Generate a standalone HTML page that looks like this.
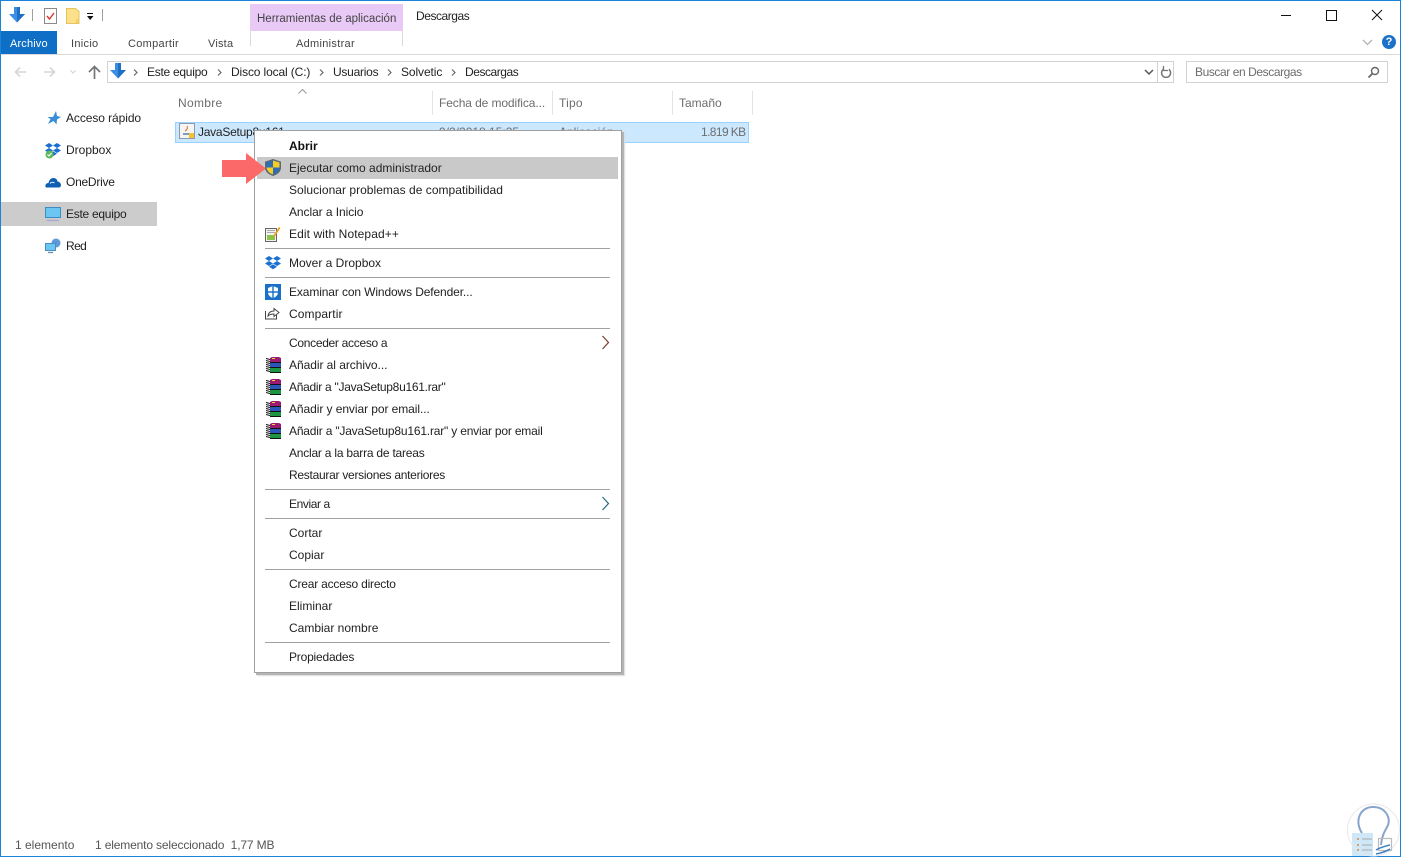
<!DOCTYPE html>
<html lang="es"><head><meta charset="utf-8"><title>Descargas</title>
<style>
html,body{margin:0;padding:0;background:#fff}
#w{position:relative;width:1401px;height:857px;overflow:hidden;background:#fff;font:12px/16px "Liberation Sans",sans-serif;color:#222}
.t{position:absolute;white-space:nowrap}
.b{position:absolute}
svg{position:absolute;overflow:visible}
.g{color:#6d6d6d}
.h{color:#555}
.sep{position:absolute;left:265px;width:345px;height:1px;background:#a0a0a0}
</style></head><body><div id="w">
<svg width="0" height="0" style="left:0;top:0"><defs>
<symbol id="rar" viewBox="0 0 16 16">
<path d="M5 1l2-1h7l2 1v4H5z" fill="#9a1c72"/><path d="M7 1h3v1H7z" fill="#f5d040"/>
<path d="M5 5.500h11v4.500H5z" fill="#2c55b8"/><path d="M5 10.500h11V15H5z" fill="#1c9442"/>
<path d="M5 5.500h11M5 10.500h11M5 15.500h11" stroke="#111"/>
<path d="M1 1.500l4 1M1 3.500l4 1M1 5.500l4 1M1 7.500l4 1M1 9.500l4 1M1 11.500l4 1M1 13.500l4 1" stroke="#111" stroke-width="1"/>
<path d="M1 2.500l4 1M1 4.500l4 1M1 8.500l4 1M1 12.500l4 1" stroke="#e8e8e8" stroke-width=".8"/>
</symbol>
<symbol id="dbx" viewBox="0 0 16 14">
<path d="M4 0l4 2.500L4 5 0 2.500zM12 0l4 2.500L12 5 8 2.500zM4 5l4 2.500L4 10 0 7.500zM12 5l4 2.500L12 10 8 7.500zM4 10.800l4-2.500 4 2.500L8 13.300z" fill="#1a6fd0"/>
</symbol>
<symbol id="down" viewBox="0 0 16 16">
<path d="M5 0h6v7h5l-8 8.500L0 7h5z" fill="#3a8ee6"/><path d="M8 0h3v7h5l-8 8.500z" fill="#1f6fc4"/>
</symbol>
</defs></svg>

<!-- window frame -->
<div class="b" style="left:0;top:0;width:1401px;height:1px;background:#1a84d8"></div>
<div class="b" style="left:0;top:0;width:1px;height:857px;background:#1a84d8"></div>
<div class="b" style="left:1400px;top:0;width:1px;height:857px;background:#1a84d8"></div>
<div class="b" style="left:0;top:856px;width:1401px;height:1px;background:#1a84d8"></div>

<!-- QAT -->
<svg style="left:9px;top:7px" width="16" height="16"><use href="#down" width="16" height="16"/></svg>
<div class="b" style="left:32px;top:9px;width:1px;height:12px;background:#a0a0a0"></div>
<svg style="left:44px;top:8px" width="13" height="16" viewBox="0 0 13 16"><path d="M.5.500h12v15H.5z" fill="#fff" stroke="#8a8a8a"/><path d="M3 8l2.500 3L10 5" fill="none" stroke="#d8362a" stroke-width="1.400"/></svg>
<svg style="left:66px;top:8px" width="14" height="16" viewBox="0 0 14 16"><path d="M.5.500h9l3.500 3v12H.5z" fill="#fde08a" stroke="#e6c35c"/><path d="M10 11h3v4h-3z" fill="#f3cf6a"/></svg>
<svg style="left:86px;top:13px" width="9" height="8" viewBox="0 0 9 8"><path d="M1 .500h6" stroke="#111"/><path d="M1 3h6.500L4.200 7z" fill="#111"/></svg>
<div class="b" style="left:102px;top:9px;width:1px;height:12px;background:#a0a0a0"></div>

<!-- context tab -->
<div class="b" style="left:250px;top:4px;width:153px;height:27px;background:#e9c9f6"></div>
<div class="t" style="left:257px;top:11px;color:#444;font-size:11.500px">Herramientas de aplicación</div>
<div class="t" style="left:416px;top:8px;color:#222;letter-spacing:-.45px">Descargas</div>
<div class="b" style="left:250px;top:31px;width:1px;height:15px;background:#dadada"></div>
<div class="b" style="left:402px;top:31px;width:1px;height:15px;background:#dadada"></div>

<!-- ribbon tabs -->
<div class="b" style="left:1px;top:31px;width:56px;height:23px;background:#0f6fc6"></div>
<div class="t" style="left:10px;top:36px;color:#fff;font-size:11px;letter-spacing:.15px">Archivo</div>
<div class="t" style="left:71px;top:36px;color:#444;font-size:11px;letter-spacing:.3px">Inicio</div>
<div class="t" style="left:128px;top:36px;color:#444;font-size:11px;letter-spacing:.3px">Compartir</div>
<div class="t" style="left:208px;top:36px;color:#444;font-size:11px;letter-spacing:.2px">Vista</div>
<div class="t" style="left:296px;top:36px;color:#444;font-size:11px;letter-spacing:.3px">Administrar</div>
<div class="b" style="left:1px;top:54px;width:1399px;height:1px;background:#dadada"></div>

<!-- window controls -->
<div class="b" style="left:1281px;top:15px;width:10px;height:1px;background:#111"></div>
<div class="b" style="left:1326px;top:10px;width:9px;height:9px;border:1px solid #111"></div>
<svg style="left:1371px;top:9px" width="12" height="12" viewBox="0 0 12 12"><path d="M1 1l10 10M11 1L1 11" stroke="#111" stroke-width="1"/></svg>
<svg style="left:1362px;top:39px" width="11" height="7" viewBox="0 0 11 7"><path d="M1 1l4.500 4.500L10 1" fill="none" stroke="#b4b4b4" stroke-width="1.300"/></svg>
<div class="b" style="left:1382px;top:35px;width:14px;height:14px;border-radius:50%;background:#1a72c8"></div>
<div class="t" style="left:1382px;top:34px;width:14px;text-align:center;color:#fff;font-weight:bold;font-size:11px">?</div>

<!-- nav -->
<svg style="left:14px;top:66px" width="13" height="12" viewBox="0 0 13 12"><path d="M12 6H2M6 1.500L1.500 6 6 10.500" fill="none" stroke="#d6d6d6" stroke-width="1.600"/></svg>
<svg style="left:43px;top:66px" width="13" height="12" viewBox="0 0 13 12"><path d="M1 6h10M7 1.500L11.500 6 7 10.500" fill="none" stroke="#d6d6d6" stroke-width="1.600"/></svg>
<svg style="left:70px;top:70px" width="6" height="4" viewBox="0 0 6 4"><path d="M.500.500L3 3 5.500.500" fill="none" stroke="#d0d0d0"/></svg>
<svg style="left:88px;top:65px" width="13" height="14" viewBox="0 0 13 14"><path d="M6.500 14V2M1 7l5.500-5.500L12 7" fill="none" stroke="#777" stroke-width="1.700"/></svg>

<!-- address bar -->
<div class="b" style="left:107px;top:61px;width:1065px;height:20px;border:1px solid #d2d2d2"></div>
<div class="b" style="left:1157px;top:62px;width:1px;height:20px;background:#d2d2d2"></div>
<svg style="left:110px;top:63px" width="16" height="16"><use href="#down" width="16" height="16"/></svg>
<svg style="left:133px;top:69px" width="5" height="7" viewBox="0 0 5 7"><path d="M1 .500L4 3.500 1 6.500" fill="none" stroke="#666" stroke-width="1.200"/></svg>
<div class="t" style="left:147px;top:64px;letter-spacing:-.27px">Este equipo</div>
<svg style="left:217px;top:69px" width="5" height="7" viewBox="0 0 5 7"><path d="M1 .500L4 3.500 1 6.500" fill="none" stroke="#666" stroke-width="1.200"/></svg>
<div class="t" style="left:231px;top:64px;letter-spacing:-.13px">Disco local (C:)</div>
<svg style="left:319px;top:69px" width="5" height="7" viewBox="0 0 5 7"><path d="M1 .500L4 3.500 1 6.500" fill="none" stroke="#666" stroke-width="1.200"/></svg>
<div class="t" style="left:333px;top:64px;letter-spacing:-.25px">Usuarios</div>
<svg style="left:387px;top:69px" width="5" height="7" viewBox="0 0 5 7"><path d="M1 .500L4 3.500 1 6.500" fill="none" stroke="#666" stroke-width="1.200"/></svg>
<div class="t" style="left:401px;top:64px;letter-spacing:-.1px">Solvetic</div>
<svg style="left:451px;top:69px" width="5" height="7" viewBox="0 0 5 7"><path d="M1 .500L4 3.500 1 6.500" fill="none" stroke="#666" stroke-width="1.200"/></svg>
<div class="t" style="left:465px;top:64px;letter-spacing:-.45px">Descargas</div>
<svg style="left:1144px;top:69px" width="10" height="7" viewBox="0 0 10 7"><path d="M1 1l4 4 4-4" fill="none" stroke="#555" stroke-width="1.500"/></svg>
<svg style="left:1160px;top:65px" width="12" height="14" viewBox="0 0 12 14"><path d="M8.800 4.300A4.500 4.500 0 1 1 3.500 4.200" fill="none" stroke="#777" stroke-width="1.500"/><path d="M3.500 1v4.500H8" fill="none" stroke="#777" stroke-width="1.300"/></svg>

<!-- search -->
<div class="b" style="left:1186px;top:61px;width:200px;height:20px;border:1px solid #d2d2d2"></div>
<div class="t g" style="left:1195px;top:64px;letter-spacing:-.42px">Buscar en Descargas</div>
<svg style="left:1367px;top:66px" width="13" height="13" viewBox="0 0 13 13"><circle cx="8" cy="5" r="3.500" fill="none" stroke="#666" stroke-width="1.400"/><path d="M5.500 7.500L1.500 11.500" stroke="#666" stroke-width="1.800"/></svg>

<!-- nav pane -->
<div class="b" style="left:1px;top:202px;width:156px;height:24px;background:#cccccc"></div>
<svg style="left:46px;top:110px" width="16" height="16" viewBox="0 0 16 16"><path d="M10 1l1 5 4 1-4 2.500-.500 5L7.500 11 2 14l2.500-5L1.500 7H7z" fill="#3a8ed8"/></svg>
<div class="t" style="left:66px;top:110px;letter-spacing:-.08px">Acceso rápido</div>
<svg style="left:45px;top:143px" width="16" height="14"><use href="#dbx" width="16" height="14"/></svg>
<svg style="left:45px;top:150px" width="9" height="9" viewBox="0 0 9 9"><circle cx="4.500" cy="4.500" r="4" fill="#5cb85c"/><path d="M2.500 4.500l1.500 1.500 2.500-3" fill="none" stroke="#fff"/></svg>
<div class="t" style="left:66px;top:142px">Dropbox</div>
<svg style="left:45px;top:177px" width="16" height="11" viewBox="0 0 16 11"><path d="M1 10.500C-.500 8.500 1 6 3.500 6 4 3 6 1 8.500 1c2.200 0 3.800 1.500 4 3.500 2 .2 3.500 2 3.500 3.500 0 1.500-1 2.500-2 2.500z" fill="#0e5fb4"/><path d="M5 6.500c1-1.500 3-1.500 4.500-.5" fill="none" stroke="#fff"/></svg>
<div class="t" style="left:66px;top:174px;letter-spacing:-.25px">OneDrive</div>
<svg style="left:45px;top:207px" width="16" height="15" viewBox="0 0 16 15"><path d="M.500.500h15v10H.500z" fill="#6cc6f2" stroke="#3a8ec4"/><path d="M2 13.500h12" stroke="#a8a8d0" stroke-width="1.300"/></svg>
<div class="t" style="left:66px;top:206px;letter-spacing:-.27px">Este equipo</div>
<svg style="left:45px;top:238px" width="16" height="16" viewBox="0 0 16 16"><circle cx="11" cy="5" r="4.500" fill="#5e9ad6"/><path d="M.500 5.500h10v7H.500z" fill="#6cc6f2" stroke="#4a8ec4"/><path d="M3 14.500h5" stroke="#6a8cb0" stroke-width="1.300"/></svg>
<div class="t" style="left:66px;top:238px;letter-spacing:-.6px">Red</div>

<!-- columns -->
<div class="t g" style="left:178px;top:95px;letter-spacing:.3px">Nombre</div>
<svg style="left:298px;top:89px" width="9" height="5" viewBox="0 0 9 5"><path d="M.500 4.500L4.500.500l4 4" fill="none" stroke="#999"/></svg>
<div class="b" style="left:432px;top:91px;width:1px;height:24px;background:#e4e4e4"></div>
<div class="t g" style="left:439px;top:95px;letter-spacing:-.1px">Fecha de modifica...</div>
<div class="b" style="left:552px;top:91px;width:1px;height:24px;background:#e4e4e4"></div>
<div class="t g" style="left:559px;top:95px;letter-spacing:.2px">Tipo</div>
<div class="b" style="left:672px;top:91px;width:1px;height:24px;background:#e4e4e4"></div>
<div class="t g" style="left:679px;top:95px">Tamaño</div>
<div class="b" style="left:752px;top:91px;width:1px;height:24px;background:#e4e4e4"></div>

<!-- selected row -->
<div class="b" style="left:175px;top:122px;width:572px;height:19px;border:1px solid #99d1ff;background:#cce8ff"></div>
<svg style="left:179px;top:123px" width="16" height="16" viewBox="0 0 16 16"><path d="M.500.500h15v15H.500z" fill="#f4f4f4" stroke="#8a9ab0"/><path d="M4 11h7" stroke="#3a6ea8" stroke-width="1.300"/><path d="M6 8c2-1 3-3 2-5" fill="none" stroke="#e07020"/><rect x="10" y="10" width="5" height="5" fill="#f2c230"/></svg>
<div class="t" style="left:198px;top:124px;letter-spacing:-.25px">JavaSetup8u161</div>
<div class="t g" style="left:439px;top:124px">9/2/2018 15:35</div>
<div class="t g" style="left:559px;top:124px">Aplicación</div>
<div class="t g" style="left:701px;top:124px;letter-spacing:-.6px">1.819 KB</div>

<!-- context menu -->
<div class="b" style="left:254px;top:130px;width:366px;height:541px;background:#fff;border:1px solid #a0a0a0;box-shadow:2px 2px 0 #b4b4b4,3px 3px 1px #dcdcdc"></div>
<div class="b" style="left:257px;top:157px;width:361px;height:22px;background:#c9c9c9"></div>

<div class="t" style="left:289px;top:138px;font-weight:bold;color:#111">Abrir</div>
<div class="t" style="left:289px;top:160px">Ejecutar como administrador</div>
<div class="t" style="left:289px;top:182px;letter-spacing:.03px">Solucionar problemas de compatibilidad</div>
<div class="t" style="left:289px;top:204px;letter-spacing:-.07px">Anclar a Inicio</div>
<div class="t" style="left:289px;top:226px;letter-spacing:.1px">Edit with Notepad++</div>
<div class="sep" style="top:248px"></div>
<div class="t" style="left:289px;top:255px">Mover a Dropbox</div>
<div class="sep" style="top:277px"></div>
<div class="t" style="left:289px;top:284px;letter-spacing:-.12px">Examinar con Windows Defender...</div>
<div class="t" style="left:289px;top:306px;letter-spacing:.1px">Compartir</div>
<div class="sep" style="top:328px"></div>
<div class="t" style="left:289px;top:335px;letter-spacing:-.3px">Conceder acceso a</div>
<div class="t" style="left:289px;top:357px;letter-spacing:-.05px">Añadir al archivo...</div>
<div class="t" style="left:289px;top:379px;letter-spacing:-.28px">Añadir a "JavaSetup8u161.rar"</div>
<div class="t" style="left:289px;top:401px;letter-spacing:-.07px">Añadir y enviar por email...</div>
<div class="t" style="left:289px;top:423px;letter-spacing:-.19px">Añadir a "JavaSetup8u161.rar" y enviar por email</div>
<div class="t" style="left:289px;top:445px;letter-spacing:-.22px">Anclar a la barra de tareas</div>
<div class="t" style="left:289px;top:467px;letter-spacing:-.27px">Restaurar versiones anteriores</div>
<div class="sep" style="top:489px"></div>
<div class="t" style="left:289px;top:496px;letter-spacing:-.4px">Enviar a</div>
<div class="sep" style="top:518px"></div>
<div class="t" style="left:289px;top:525px">Cortar</div>
<div class="t" style="left:289px;top:547px">Copiar</div>
<div class="sep" style="top:569px"></div>
<div class="t" style="left:289px;top:576px;letter-spacing:-.2px">Crear acceso directo</div>
<div class="t" style="left:289px;top:598px">Eliminar</div>
<div class="t" style="left:289px;top:620px">Cambiar nombre</div>
<div class="sep" style="top:642px"></div>
<div class="t" style="left:289px;top:649px;letter-spacing:-.2px">Propiedades</div>

<!-- menu arrows -->
<svg style="left:601px;top:335px" width="9" height="15" viewBox="0 0 9 15"><path d="M1.500 1l6 6.500-6 6.500" fill="none" stroke="#7a3a2a" stroke-width="1.200"/></svg>
<svg style="left:601px;top:496px" width="9" height="15" viewBox="0 0 9 15"><path d="M1.500 1l6 6.500-6 6.500" fill="none" stroke="#2a6a7a" stroke-width="1.200"/></svg>

<!-- red arrow -->
<svg style="left:222px;top:153px" width="44" height="31" viewBox="0 0 44 31"><path d="M0 7h24V0l20 15.500L24 31v-7H0z" fill="#fb6a68"/></svg>

<!-- menu icons -->
<svg style="left:265px;top:159px" width="16" height="17" viewBox="0 0 16 17"><path d="M8 .500L15.500 3v5.500c0 4-3.500 6.800-7.500 8C4 15.300.500 12.500.500 8.500V3z" fill="#2f6eb0" stroke="#666"/><path d="M8 1.500V8.500H14.500V3.500zM8 8.500H1.500C2 12 4.800 14.500 8 15.500z" fill="#f8cc22"/></svg>
<svg style="left:265px;top:226px" width="16" height="16" viewBox="0 0 16 16"><path d="M.500 2.500h11v13H.500z" fill="#f2f2f2" stroke="#666"/><path d="M2 9h8v5H2z" fill="#8bc24a"/><path d="M2 4.500h8M2 6.500h8" stroke="#aaa"/><path d="M8 10l6-9 1.500 1-6 9z" fill="#e8a020"/></svg>
<svg style="left:265px;top:256px" width="16" height="14"><use href="#dbx" width="16" height="14"/></svg>
<svg style="left:265px;top:284px" width="16" height="16" viewBox="0 0 16 16"><rect width="16" height="16" fill="#1a72c8"/><path d="M8 2l5 2v4c0 3-2 5-5 6-3-1-5-3-5-6V4z" fill="#fff"/><path d="M8 2v12M3 8h10" stroke="#1a72c8" stroke-width="1.400"/></svg>
<svg style="left:265px;top:306px" width="15" height="14" viewBox="0 0 15 14"><path d="M.500 5v8h11V9" fill="none" stroke="#444"/><path d="M3 10c.5-3.500 3-5 6-5V2.500l5 4-5 4V8C6.500 8 4.500 8.500 3 10z" fill="#fff" stroke="#444"/></svg>
<svg style="left:265px;top:357px" width="16" height="16"><use href="#rar" width="16" height="16"/></svg>
<svg style="left:265px;top:379px" width="16" height="16"><use href="#rar" width="16" height="16"/></svg>
<svg style="left:265px;top:401px" width="16" height="16"><use href="#rar" width="16" height="16"/></svg>
<svg style="left:265px;top:423px" width="16" height="16"><use href="#rar" width="16" height="16"/></svg>

<!-- status bar -->
<div class="t h" style="left:15px;top:837px">1 elemento</div>
<div class="t h" style="left:95px;top:837px;letter-spacing:-.15px">1 elemento seleccionado&nbsp; 1,77 MB</div>

<!-- watermark -->
<div class="b" style="left:1352px;top:833px;width:21px;height:23px;background:#cfe8f8"></div>
<svg style="left:1346px;top:803px" width="55" height="54" viewBox="0 0 55 54">
<circle cx="27.500" cy="27" r="26" fill="none" stroke="#e8e8ec" stroke-width="1"/>
<path d="M16 30C8 18 14 4 27 4 40 4 46 16 41 24 39 28 36 32 35 42" fill="none" stroke="#8aa4cc" stroke-width="2"/>
<rect x="32.500" y="35.500" width="13" height="12" fill="none" stroke="#bbb" stroke-width="1.200"/>
<path d="M30 47c5-3 10-4 14-5M30 51c5-1 11-3 14-5" fill="none" stroke="#3a7cc0" stroke-width="1.500"/>
<path d="M11 35h2v2h-2zM11 41h2v2h-2zM11 46h2v2h-2z" fill="#d8a070"/>
<path d="M16 36h10M16 42h10M16 47h10" stroke="#aaa" stroke-width="1"/>
</svg>
</div></body></html>
